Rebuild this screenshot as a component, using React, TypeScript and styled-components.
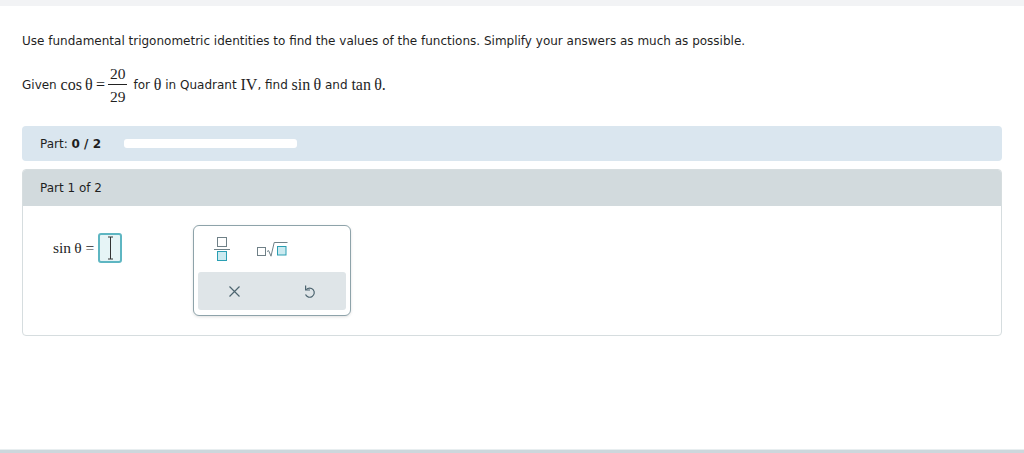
import React from 'react';
import styled, { createGlobalStyle } from 'styled-components';

const GlobalStyle = createGlobalStyle`
  *, *::before, *::after {
    box-sizing: border-box;
  }
  html, body {
    margin: 0;
    padding: 0;
    background: #ffffff;
  }
  body {
    font-family: "DejaVu Sans", Verdana, sans-serif;
    color: #1f1f1f;
  }
`;

const Page = styled.div`
  height: 453px;
  display: flex;
  flex-direction: column;
  overflow: hidden;
`;

const TopStrip = styled.div`
  height: 6px;
  background: #f2f3f5;
  flex-shrink: 0;
`;

const Content = styled.div`
  flex: 1;
  padding: 0 22px;
`;

const Instruction = styled.p`
  margin: 28px 0 0;
  font-size: 12px;
  line-height: 15px;
`;

const GivenLine = styled.div`
  margin-top: 16px;
  display: flex;
  align-items: center;
  font-size: 12px;
  height: 40px;
  white-space: pre;
`;

const MathText = styled.span`
  font-family: "Liberation Serif", "Times New Roman", serif;
  font-size: 16px;
  white-space: pre;
`;

const Fraction = styled.span`
  display: inline-flex;
  flex-direction: column;
  align-items: center;
  font-family: "Liberation Serif", "Times New Roman", serif;
  font-size: 15.5px;
  line-height: 15px;
  margin: 0 6px 0 3px;
`;

const Numer = styled.span`
  padding: 0 2px 3px;
  border-bottom: 1px solid #222;
`;

const Denom = styled.span`
  padding: 4px 2px 0;
`;

const PartBar = styled.div`
  margin-top: 21px;
  height: 35px;
  background: #dae6ef;
  border-radius: 4px;
  display: flex;
  align-items: center;
  padding: 0 18px;
  font-size: 12px;
  gap: 23px;
`;

const Progress = styled.div`
  width: 173px;
  height: 9px;
  background: #ffffff;
  border-radius: 3px;
`;

const PartCard = styled.div`
  margin-top: 8px;
  border: 1px solid #d6dddf;
  border-radius: 4px;
  overflow: hidden;
`;

const PartHeader = styled.div`
  height: 36px;
  background: #d2dadd;
  display: flex;
  align-items: center;
  padding: 0 17px;
  font-size: 12px;
`;

const PartBody = styled.div`
  height: 129px;
  display: flex;
  align-items: flex-start;
  padding: 19px 0 0 30px;
`;

const AnswerRow = styled.div`
  display: flex;
  align-items: center;
  margin-top: 8px;
`;

const AnswerLabel = styled.span`
  font-family: "Liberation Serif", "Times New Roman", serif;
  font-size: 15.5px;
  white-space: pre;
  margin-right: 4px;
`;

const AnswerBox = styled.div`
  width: 24px;
  height: 30px;
  background: #e6f4f6;
  border: 2px solid #5eb6c2;
  border-radius: 3px;
  display: flex;
  align-items: center;
  justify-content: center;
`;

const Keypad = styled.div`
  margin-left: 71px;
  width: 158px;
  height: 91px;
  border: 1px solid #8ea3aa;
  border-radius: 6px;
  box-shadow: 0 1px 3px rgba(0, 0, 0, 0.12);
  background: #ffffff;
  display: flex;
  flex-direction: column;
  padding: 0 4px 5px;
`;

const KeyRow = styled.div`
  flex: 1;
  display: flex;
  align-items: center;
  padding: 0 0 0 16px;
  gap: 27px;
`;

const ActionRow = styled.div`
  height: 38px;
  background: #dfe5e8;
  border-radius: 3px;
  display: flex;
  align-items: center;
  padding: 0 0 0 31px;
  gap: 63px;
`;

const Footer = styled.div`
  height: 4px;
  border-top: 1px solid #e8eef0;
  background: #cdd7dc;
  flex-shrink: 0;
`;

const CursorIcon = () => (
  <svg width="7" height="24" viewBox="0 0 7 24">
    <path d="M1 1h5M1 23h5M3.5 1v22" stroke="#333" strokeWidth="1" fill="none" />
  </svg>
);

const FractionIcon = () => (
  <svg width="16" height="24" viewBox="0 0 16 24">
    <rect x="3.5" y="0.5" width="9" height="9" fill="none" stroke="#6f8087" />
    <path d="M0 12.5h16" stroke="#6f8087" />
    <rect x="3.5" y="14.5" width="9" height="9" fill="#cbeaf0" stroke="#2a9fb3" />
  </svg>
);

const SqrtIcon = () => (
  <svg width="31" height="15" viewBox="0 0 31 15">
    <rect x="0.5" y="5.5" width="8" height="8" fill="none" stroke="#6f8087" />
    <path d="M10 9.5l1.6-0.9 2.4 5.6 3.2-13.7h13.3" fill="none" stroke="#6f8087" strokeWidth="1" />
    <rect x="20.5" y="4.5" width="8.5" height="8.5" fill="#cbeaf0" stroke="#2a9fb3" />
  </svg>
);

const CloseIcon = () => (
  <svg width="11" height="11" viewBox="0 0 11 11">
    <path d="M0.5 0.5l10 10M10.5 0.5l-10 10" stroke="#4d6570" strokeWidth="1.2" />
  </svg>
);

const UndoIcon = () => (
  <svg width="13" height="15" viewBox="0 0 13 15">
    <path d="M3.2 5.6a4.6 4.6 0 1 1 -0.7 5" fill="none" stroke="#4d6570" strokeWidth="1.2" />
    <path d="M2.6 1.6v4.4h4.4" fill="none" stroke="#4d6570" strokeWidth="1.2" />
  </svg>
);

export default function App() {
  return (
    <Page>
      <GlobalStyle />
      <TopStrip />
      <Content>
        <Instruction>
          Use fundamental trigonometric identities to find the values of the functions. Simplify your answers as much as possible.
        </Instruction>
        <GivenLine>
          {'Given '}
          <MathText>{'cos\u2009θ\u2009='}</MathText>
          <Fraction>
            <Numer>20</Numer>
            <Denom>29</Denom>
          </Fraction>
          {'for '}
          <MathText>θ</MathText>
          {' in Quadrant '}
          <MathText>IV</MathText>
          {', find '}
          <MathText>{'sin\u2009θ'}</MathText>
          {' and '}
          <MathText>{'tan\u2009θ.'}</MathText>
        </GivenLine>
        <PartBar>
          <span>
            Part: <b>0 / 2</b>
          </span>
          <Progress />
        </PartBar>
        <PartCard>
          <PartHeader>Part 1 of 2</PartHeader>
          <PartBody>
            <AnswerRow>
              <AnswerLabel>{'sin\u2009θ ='}</AnswerLabel>
              <AnswerBox>
                <CursorIcon />
              </AnswerBox>
            </AnswerRow>
            <Keypad>
              <KeyRow>
                <FractionIcon />
                <SqrtIcon />
              </KeyRow>
              <ActionRow>
                <CloseIcon />
                <UndoIcon />
              </ActionRow>
            </Keypad>
          </PartBody>
        </PartCard>
      </Content>
      <Footer />
    </Page>
  );
}
